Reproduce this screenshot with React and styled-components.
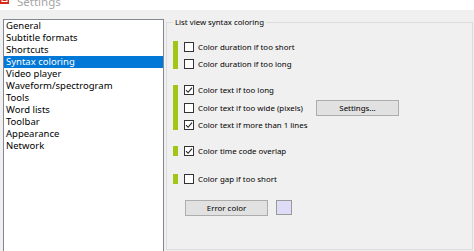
import React from 'react'
import styled, {createGlobalStyle} from 'styled-components'

const GlobalStyle = createGlobalStyle`
  html, body {
    margin: 0;
    padding: 0;
    background: #f0f0f0;
    overflow: hidden;
  }
  * { box-sizing: border-box; }
`

const pages = [
    'General',
    'Subtitle formats',
    'Shortcuts',
    'Syntax coloring',
    'Video player',
    'Waveform/spectrogram',
    'Tools',
    'Word lists',
    'Toolbar',
    'Appearance',
    'Network',
]

const sections = [
    [
        {label: 'Color duration if too short', checked: false},
        {label: 'Color duration if too long', checked: false},
    ],
    [
        {label: 'Color text if too long', checked: true},
        {label: 'Color text if too wide (pixels)', checked: false, button: 'Settings...'},
        {label: 'Color text if more than 1 lines', checked: true},
    ],
    [
        {label: 'Color time code overlap', checked: true},
    ],
    [
        {label: 'Color gap if too short', checked: false},
    ],
]

const AppIcon = () => (
    <svg width="10" height="6" viewBox="0 0 10 6">
        <rect x="0" y="0" width="9" height="5" fill="#d9281c" />
        <rect x="2" y="0" width="5" height="2.5" fill="none" stroke="#fff" strokeWidth="1" />
    </svg>
)

const Tick = () => (
    <svg width="8" height="8" viewBox="0 0 8 8">
        <path d="M1 4.2 L3.1 6.3 L7 1.6" fill="none" stroke="#222" strokeWidth="1.1" />
    </svg>
)

const SettingRow = ({label, checked, button}) => (
    <Row>
        <Box>{checked && <Tick />}</Box>
        <Label>{label}</Label>
        {button && <Button>{button}</Button>}
    </Row>
)

const App = () => {
    return (
        <Window>
            <GlobalStyle />
            <TitleBar>
                <AppIcon />
                <Title>Settings</Title>
            </TitleBar>
            <Body>
                <ListBox>
                    {pages.map(p => (
                        <ListItem key={p} selected={p === 'Syntax coloring'}>{p}</ListItem>
                    ))}
                </ListBox>
                <GroupBox>
                    <Legend>List view syntax coloring</Legend>
                    <Sections>
                        {sections.map((rows, i) => (
                            <Section key={i} $extra={i === 3}>
                                <Bar />
                                <Rows>
                                    {rows.map(r => <SettingRow key={r.label} {...r} />)}
                                </Rows>
                            </Section>
                        ))}
                        <ButtonRow>
                            <Button>Error color</Button>
                            <Swatch />
                        </ButtonRow>
                    </Sections>
                </GroupBox>
            </Body>
        </Window>
    )
}

const Window = styled.div`
  width: 474px;
  height: 251px;
  overflow: hidden;
  display: flex;
  flex-direction: column;
  font-family: "Segoe UI", "Noto Sans", sans-serif;
  color: #000;
`

const TitleBar = styled.div`
  height: 10px;
  flex: none;
  background: #fff;
  display: flex;
  align-items: flex-end;
  overflow: hidden;
  svg {
    align-self: flex-start;
    margin-top: -1px;
  }
`

const Title = styled.span`
  margin-left: 7px;
  margin-bottom: 2px;
  font-size: 11.5px;
  line-height: 12px;
  color: #a6a6a6;
`

const Body = styled.div`
  flex: 1;
  display: flex;
  align-items: flex-start;
  padding: 9px 1px 0 3px;
`

const ListBox = styled.ul`
  list-style: none;
  margin: 0;
  padding: 0;
  width: 161px;
  height: 260px;
  flex: none;
  background: #fff;
  border: 1px solid #828790;
`

const ListItem = styled.li`
  height: 12px;
  line-height: 12px;
  padding-left: 2px;
  font-size: 9.5px;
  white-space: nowrap;
  background: ${p => p.selected ? '#0078d7' : 'transparent'};
  color: ${p => p.selected ? '#fff' : '#000'};
`

const GroupBox = styled.fieldset`
  flex: 1;
  margin: -3px 0 0 2px;
  height: 234px;
  padding: 12px 0 0 6px;
  border: 1px solid #dcdcdc;
  min-width: 0;
`

const Legend = styled.legend`
  margin-left: 0;
  padding: 0 2px;
  font-size: 7.8px;
  line-height: 12px;
  color: #000;
`

const Sections = styled.div`
  display: flex;
  flex-direction: column;
  gap: 13px;
`

const Section = styled.div`
  display: flex;
  gap: 6px;
  margin-top: ${p => p.$extra ? '2px' : '0'};
`

const Bar = styled.div`
  width: 5px;
  flex: none;
  margin: 1px 0 2px;
  background: #a2c617;
`

const Rows = styled.div`
  display: flex;
  flex-direction: column;
  gap: 4.5px;
`

const Row = styled.div`
  height: 13px;
  display: flex;
  align-items: center;
  gap: 4px;
`

const Box = styled.span`
  width: 10px;
  height: 10px;
  flex: none;
  display: flex;
  align-items: center;
  justify-content: center;
  background: #fff;
  border: 1px solid #333;
`

const Label = styled.span`
  width: 114px;
  flex: none;
  font-size: 7.9px;
  white-space: nowrap;
`

const Button = styled.button`
  width: 83px;
  height: 16px;
  padding: 0;
  flex: none;
  background: #e1e1e1;
  border: 1px solid #adadad;
  border-radius: 0;
  font-family: inherit;
  font-size: 7.9px;
  color: #000;
`

const ButtonRow = styled.div`
  display: flex;
  align-items: center;
  gap: 8px;
  margin: 1px 0 0 12px;
`

const Swatch = styled.div`
  width: 16px;
  height: 15px;
  background: #dedcf7;
  border: 1px solid #9a9a9a;
`

export default App
